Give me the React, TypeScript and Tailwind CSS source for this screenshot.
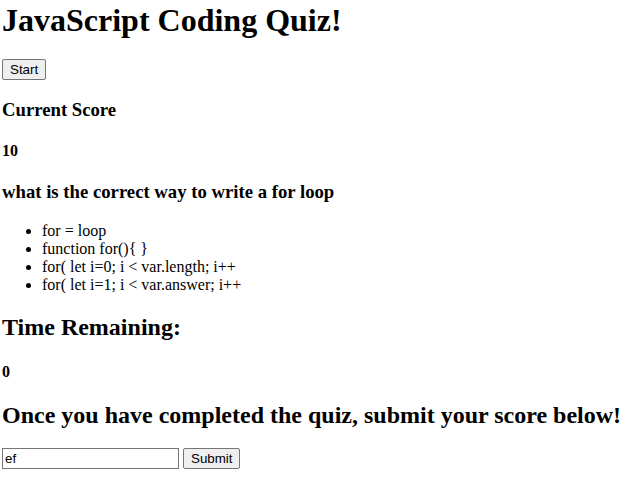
import React from "react";

const answers = [
  "for = loop",
  "function for(){ }",
  "for( let i=0; i < var.length; i++",
  "for( let i=1; i < var.answer; i++",
];

function NativeButton({ children }: { children: React.ReactNode }) {
  return (
    <button className="h-[21px] px-[7px] border border-[#767676] rounded-[2px] bg-[#efefef] text-[13.33px] leading-[15px] text-black font-['Liberation_Sans',Arial,sans-serif] align-middle">
      {children}
    </button>
  );
}

export default function App() {
  return (
    <div className="px-[2px] pt-[2px] text-black text-[16px] font-['Liberation_Serif','Times_New_Roman',serif]">
      <h1 className="text-[32px] font-bold leading-[37px] mb-[18px]">JavaScript Coding Quiz!</h1>
      <div className="leading-[21px]">
        <NativeButton>Start</NativeButton>
      </div>

      <h3 className="mt-[19px] mb-[22px] text-[18.72px] font-bold leading-[21.5px]">Current Score</h3>
      <h4 className="mb-[20px] font-bold leading-[18.4px]">10</h4>

      <h3 className="mb-[20px] text-[18.72px] font-bold leading-[21.5px]">
        what is the correct way to write a for loop
      </h3>
      <ul className="list-disc pl-[40px] leading-[18px] mb-[20px]">
        {answers.map((a) => (
          <li key={a}>{a}</li>
        ))}
      </ul>

      <h2 className="text-[24px] font-bold leading-[27.6px] mb-[21px]">Time Remaining:</h2>
      <h4 className="mb-[21px] font-bold leading-[18.4px]">0</h4>
      <h2 className="text-[24px] font-bold leading-[27.6px] mb-[18px]">
        Once you have completed the quiz, submit your score below!
      </h2>

      <div className="flex items-center gap-[4px]">
        <input
          defaultValue="ef"
          className="w-[177px] h-[21px] px-[2px] border border-[#767676] text-[13.33px] text-black font-['Liberation_Sans',Arial,sans-serif] outline-none"
        />
        <NativeButton>Submit</NativeButton>
      </div>
    </div>
  );
}
